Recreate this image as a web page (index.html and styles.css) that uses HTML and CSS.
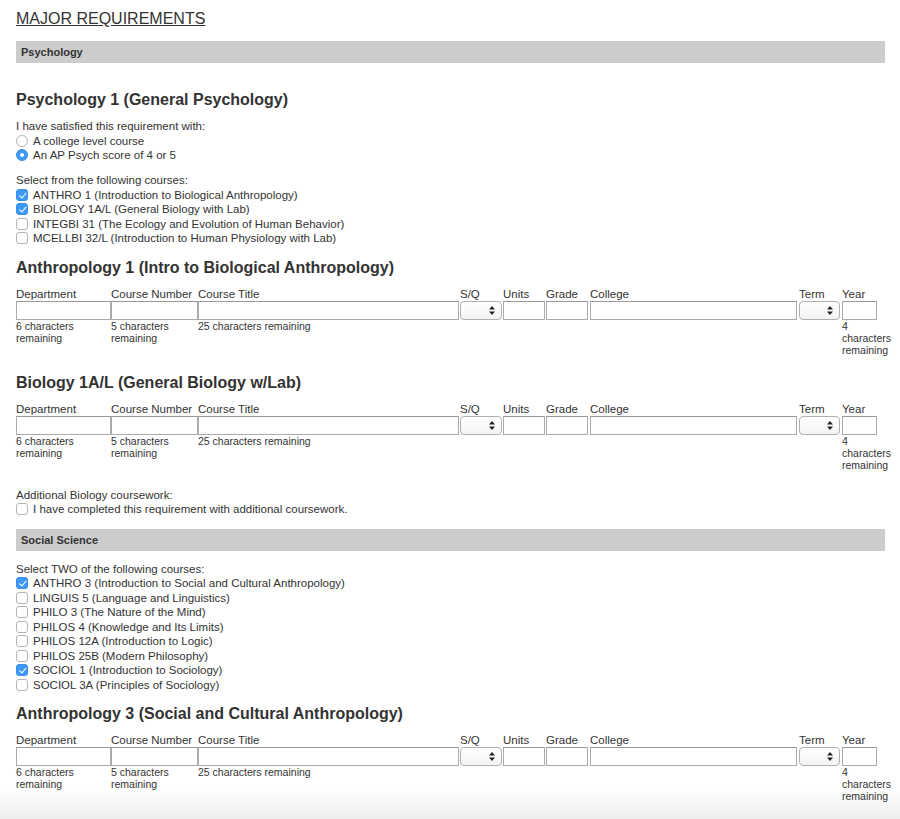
FILE: index.html
```html
<!DOCTYPE html>
<html lang="en">
<head>
  <meta charset="UTF-8">
  <meta name="viewport" content="width=device-width, initial-scale=1.0">
  <title>Major Requirements</title>
  <link rel="stylesheet" href="styles.css">
</head>
<body>
  <h1 class="page-title">MAJOR REQUIREMENTS</h1>

  <div class="section-bar">Psychology</div>

  <div class="req req-first">
    <h3>Psychology 1 (General Psychology)</h3>
    <div class="question">
      <p>I have satisfied this requirement with:</p>
      <label class="option"><input type="radio" name="psych1"> A college level course</label>
      <label class="option"><input type="radio" name="psych1" checked> An AP Psych score of 4 or 5</label>
    </div>
    <div class="question">
      <p>Select from the following courses:</p>
      <label class="option"><input type="checkbox" checked> ANTHRO 1 (Introduction to Biological Anthropology)</label>
      <label class="option"><input type="checkbox" checked> BIOLOGY 1A/L (General Biology with Lab)</label>
      <label class="option"><input type="checkbox"> INTEGBI 31 (The Ecology and Evolution of Human Behavior)</label>
      <label class="option"><input type="checkbox"> MCELLBI 32/L (Introduction to Human Physiology with Lab)</label>
    </div>
  </div>

  <div class="req">
    <h3>Anthropology 1 (Intro to Biological Anthropology)</h3>
    <div class="course-row">
      <div class="field f-dept"><span class="lbl">Department</span><input class="box" type="text"><span class="hint">6 characters remaining</span></div>
      <div class="field f-cn"><span class="lbl">Course Number</span><input class="box" type="text"><span class="hint">5 characters remaining</span></div>
      <div class="field f-title"><span class="lbl">Course Title</span><input class="box" type="text"><span class="hint">25 characters remaining</span></div>
      <div class="field f-sq"><span class="lbl">S/Q</span><div class="box select"><svg width="6" height="9" viewBox="0 0 6 9"><path d="M0 3.6 L3 0 L6 3.6 Z M0 5.4 L3 9 L6 5.4 Z"/></svg></div></div>
      <div class="field f-units"><span class="lbl">Units</span><input class="box" type="text"></div>
      <div class="field f-grade"><span class="lbl">Grade</span><input class="box" type="text"></div>
      <div class="field f-college"><span class="lbl">College</span><input class="box" type="text"></div>
      <div class="field f-term"><span class="lbl">Term</span><div class="box select"><svg width="6" height="9" viewBox="0 0 6 9"><path d="M0 3.6 L3 0 L6 3.6 Z M0 5.4 L3 9 L6 5.4 Z"/></svg></div></div>
      <div class="field f-year"><span class="lbl">Year</span><input class="box" type="text"><span class="hint">4 characters remaining</span></div>
    </div>
  </div>

  <div class="req">
    <h3>Biology 1A/L (General Biology w/Lab)</h3>
    <div class="course-row">
      <div class="field f-dept"><span class="lbl">Department</span><input class="box" type="text"><span class="hint">6 characters remaining</span></div>
      <div class="field f-cn"><span class="lbl">Course Number</span><input class="box" type="text"><span class="hint">5 characters remaining</span></div>
      <div class="field f-title"><span class="lbl">Course Title</span><input class="box" type="text"><span class="hint">25 characters remaining</span></div>
      <div class="field f-sq"><span class="lbl">S/Q</span><div class="box select"><svg width="6" height="9" viewBox="0 0 6 9"><path d="M0 3.6 L3 0 L6 3.6 Z M0 5.4 L3 9 L6 5.4 Z"/></svg></div></div>
      <div class="field f-units"><span class="lbl">Units</span><input class="box" type="text"></div>
      <div class="field f-grade"><span class="lbl">Grade</span><input class="box" type="text"></div>
      <div class="field f-college"><span class="lbl">College</span><input class="box" type="text"></div>
      <div class="field f-term"><span class="lbl">Term</span><div class="box select"><svg width="6" height="9" viewBox="0 0 6 9"><path d="M0 3.6 L3 0 L6 3.6 Z M0 5.4 L3 9 L6 5.4 Z"/></svg></div></div>
      <div class="field f-year"><span class="lbl">Year</span><input class="box" type="text"><span class="hint">4 characters remaining</span></div>
    </div>
    <div class="question">
      <p>Additional Biology coursework:</p>
      <label class="option"><input type="checkbox"> I have completed this requirement with additional coursework.</label>
    </div>
  </div>

  <div class="section-bar">Social Science</div>

  <div class="req">
    <div class="question">
      <p>Select TWO of the following courses:</p>
      <label class="option"><input type="checkbox" checked> ANTHRO 3 (Introduction to Social and Cultural Anthropology)</label>
      <label class="option"><input type="checkbox"> LINGUIS 5 (Language and Linguistics)</label>
      <label class="option"><input type="checkbox"> PHILO 3 (The Nature of the Mind)</label>
      <label class="option"><input type="checkbox"> PHILOS 4 (Knowledge and Its Limits)</label>
      <label class="option"><input type="checkbox"> PHILOS 12A (Introduction to Logic)</label>
      <label class="option"><input type="checkbox"> PHILOS 25B (Modern Philosophy)</label>
      <label class="option"><input type="checkbox" checked> SOCIOL 1 (Introduction to Sociology)</label>
      <label class="option"><input type="checkbox"> SOCIOL 3A (Principles of Sociology)</label>
    </div>
  </div>

  <div class="req">
    <h3>Anthropology 3 (Social and Cultural Anthropology)</h3>
    <div class="course-row">
      <div class="field f-dept"><span class="lbl">Department</span><input class="box" type="text"><span class="hint">6 characters remaining</span></div>
      <div class="field f-cn"><span class="lbl">Course Number</span><input class="box" type="text"><span class="hint">5 characters remaining</span></div>
      <div class="field f-title"><span class="lbl">Course Title</span><input class="box" type="text"><span class="hint">25 characters remaining</span></div>
      <div class="field f-sq"><span class="lbl">S/Q</span><div class="box select"><svg width="6" height="9" viewBox="0 0 6 9"><path d="M0 3.6 L3 0 L6 3.6 Z M0 5.4 L3 9 L6 5.4 Z"/></svg></div></div>
      <div class="field f-units"><span class="lbl">Units</span><input class="box" type="text"></div>
      <div class="field f-grade"><span class="lbl">Grade</span><input class="box" type="text"></div>
      <div class="field f-college"><span class="lbl">College</span><input class="box" type="text"></div>
      <div class="field f-term"><span class="lbl">Term</span><div class="box select"><svg width="6" height="9" viewBox="0 0 6 9"><path d="M0 3.6 L3 0 L6 3.6 Z M0 5.4 L3 9 L6 5.4 Z"/></svg></div></div>
      <div class="field f-year"><span class="lbl">Year</span><input class="box" type="text"><span class="hint">4 characters remaining</span></div>
    </div>
  </div>

  <div class="fade"></div>
</body>
</html>
```

FILE: styles.css
```css
body {
  font-family: "Liberation Sans", Arial, sans-serif;
  font-size: 11.5px;
  color: #333;
  background-color: #fff;
  margin: 0;
  padding: 0 15px 0 16px;
}
p {
  margin: 0;
}
.page-title {
  font-size: 16px;
  font-weight: normal;
  line-height: 20px;
  text-decoration: underline;
  margin: 9px 0 11px;
}
.section-bar {
  background-color: #ccc;
  font-size: 11px;
  font-weight: bold;
  height: 22px;
  line-height: 22px;
  padding-left: 5px;
  margin: 12px 0 11px;
}
h3 {
  font-size: 16px;
  line-height: 20px;
  margin: 12px 0 9px;
}
.req-first h3 {
  margin-top: 27px;
}
.question {
  line-height: 14.5px;
  margin-bottom: 10.5px;
}
.question:last-child {
  margin-bottom: 0;
}
.option {
  display: flex;
  align-items: center;
  height: 14.5px;
}
.option input {
  appearance: none;
  -webkit-appearance: none;
  width: 12px;
  height: 12px;
  margin: 0 5px 0 0;
  border: 1px solid #b4b4b4;
  border-radius: 3px;
  background: #fff;
  box-sizing: border-box;
  position: relative;
  flex-shrink: 0;
}
.option input[type="radio"] {
  border-radius: 50%;
}
.option input:checked {
  background: #3d99f5;
  border-color: #3a8fe6;
}
.option input[type="checkbox"]:checked::after {
  content: "";
  position: absolute;
  left: 3.5px;
  top: 1px;
  width: 2.5px;
  height: 5.5px;
  border: solid #fff;
  border-width: 0 1.6px 1.6px 0;
  transform: rotate(40deg);
}
.option input[type="radio"]:checked::after {
  content: "";
  position: absolute;
  left: 3px;
  top: 3px;
  width: 4px;
  height: 4px;
  border-radius: 50%;
  background: #fff;
}
.course-row {
  display: flex;
  align-items: flex-start;
  margin-bottom: 17px;
}
.field {
  display: flex;
  flex-direction: column;
  flex-shrink: 0;
  box-sizing: border-box;
}
.lbl {
  line-height: 14px;
  white-space: nowrap;
}
.box {
  width: 100%;
  height: 19px;
  margin: 0;
  padding: 0 3px;
  border: 1px solid #ababab;
  border-top-color: #999;
  background: #fff;
  box-sizing: border-box;
  font: inherit;
}
.select {
  display: flex;
  align-items: center;
  justify-content: flex-end;
  padding-right: 6px;
  border-radius: 4px;
  border-color: #b0b0b0;
  background: linear-gradient(#fff, #f3f3f3);
}
.select svg {
  fill: #222;
}
.hint {
  font-size: 10.5px;
  line-height: 12px;
}
.f-dept { width: 95px; }
.f-cn { width: 87px; }
.f-title { width: 262px; padding-right: 1px; }
.f-sq { width: 43px; padding-right: 1px; }
.f-units { width: 43px; padding-right: 1px; }
.f-grade { width: 44px; padding-right: 2px; }
.f-college { width: 209px; padding-right: 2px; }
.f-term { width: 43px; padding-right: 2px; }
.f-year { width: 36px; padding-right: 1px; }
.fade {
  position: fixed;
  left: 0;
  right: 0;
  bottom: 0;
  height: 30px;
  background: linear-gradient(rgba(0, 0, 0, 0), rgba(0, 0, 0, 0.07));
  pointer-events: none;
}
```
